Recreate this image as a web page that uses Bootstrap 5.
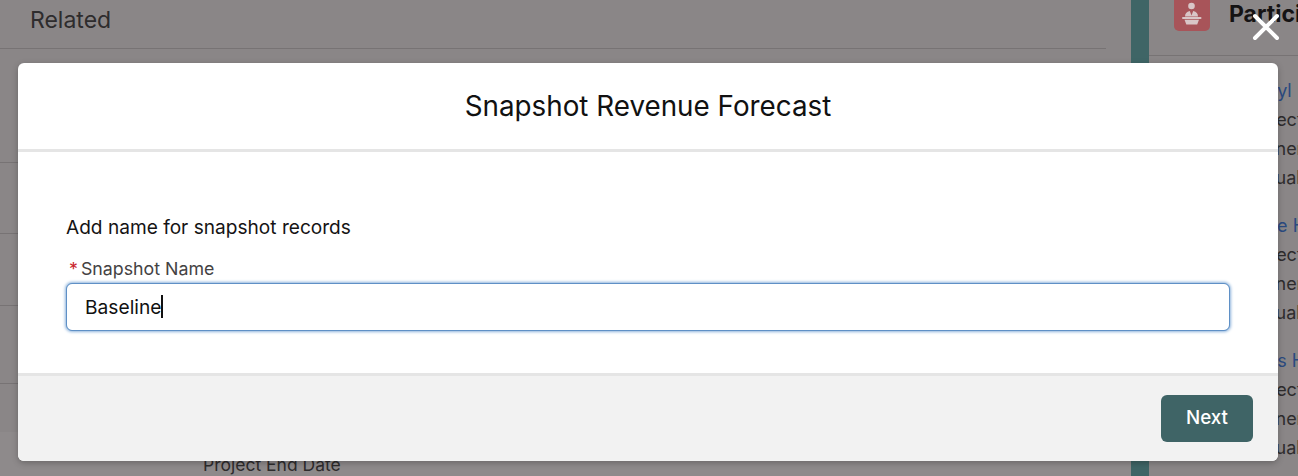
<!DOCTYPE html>
<html lang="en">
<head>
<meta charset="utf-8">
<title>Snapshot Revenue Forecast</title>
<link href="https://cdn.jsdelivr.net/npm/bootstrap@5.3.0/dist/css/bootstrap.min.css" rel="stylesheet">
<style>
html,body{height:476px;overflow:hidden}
body{background:#8a8687;font-family:"Inter","Liberation Sans",sans-serif;color:#1d1b1c}
.page-bg{height:476px;width:1298px}
.left-pane{width:1131px;flex:none}
.rel-head{height:49px;width:1106px;padding:6px 0 0 30px;font-size:23px;line-height:28px;color:#2e2c2d;border-bottom:1px solid #777374}
.rel-row{width:1106px;border-bottom:1px solid #777374}
.h-a{height:114px}.h-b{height:71px}.h-c{height:72px}.h-d{height:78px}
.rel-gap{height:48px;flex:none}
.rel-strip{flex:1;background:#8e8a8b;padding:23px 0 0 203px;font-size:17.500px;line-height:20px;color:#2e2c2d}
.teal-bar{width:18px;flex:none;background:#3f6566}
.right-pane{flex:1;min-width:0;overflow:hidden}
.part-head{height:56px;border-bottom:1px solid #777374;padding-left:25px;gap:19px}
.part-icon{width:36px;height:31px;background:#a85459;border-radius:0 0 5px 5px;flex:none}
.part-title{font-size:23px;font-weight:700;line-height:28px;color:#151314;white-space:nowrap}
.part-list{padding:20px 0 0 98px;white-space:nowrap;font-size:18px}
.part-item{margin-bottom:19px}
.part-item div{line-height:29px;color:#2e2c2d}
.part-item .p-name{color:#2b4a80}
.part-item .p-role{margin-left:-4px}
.modal-box.modal-content{position:absolute;left:18px;top:63px;width:1260px;height:398px;background:#fff;border:0;border-radius:6px;box-shadow:0 2px 6px rgba(0,0,0,.25)}
.box-head.modal-header{height:89px;flex:none;justify-content:center;border-bottom:3px solid #e5e5e5;padding:0;border-radius:6px 6px 0 0}
.box-title{font-size:27.800px;font-weight:400;line-height:32px;color:#111;margin:0}
.box-body.modal-body{padding:63px 48px 0;flex:1}
.box-intro{font-size:19.100px;line-height:24px;color:#151314;margin-bottom:20px}
.box-label{font-size:17.800px;line-height:20px;color:#444243;margin:0 0 4px 3px;display:block}
.req-mark{color:#c9262c;margin-right:3px}
.field-wrap{position:relative}
.box-input.form-control{height:48px;font-size:19.200px;color:#111;padding:0 18px;border:1px solid #5f90c6;border-radius:6px;box-shadow:0 0 3px 1px #8fb4dc;font-family:inherit}
.box-caret{position:absolute;left:95px;top:12px;width:2px;height:23px;background:#111}
.box-foot.modal-footer{height:88px;flex:none;background:#f2f2f2;border-top:3px solid #e5e5e5;padding:19px 25px 19px 0;border-radius:0 0 6px 6px;align-items:flex-start}
.box-next.btn{width:92px;height:47px;margin:0;background:#3f6466;border:0;border-radius:6px;color:#fff;font-size:18.800px;font-weight:500}
.close-x{position:absolute;left:1252px;top:13px;width:28px;height:28px}
</style>
</head>
<body>
<div class="page-bg d-flex">
  <div class="left-pane d-flex flex-column">
    <div class="rel-head">Related</div>
    <div class="rel-row h-a"></div>
    <div class="rel-row h-b"></div>
    <div class="rel-row h-c"></div>
    <div class="rel-row h-d"></div>
    <div class="rel-gap"></div>
    <div class="rel-strip">Project End Date</div>
  </div>
  <div class="teal-bar"></div>
  <div class="right-pane">
    <div class="part-head d-flex">
      <div class="part-icon">
        <svg class="d-block" width="36" height="31" viewBox="0 0 36 31" aria-hidden="true"><g fill="#d9c6c7"><circle cx="17.500" cy="6" r="3.300"/><path d="M11 16.500c0-3 1.500-4.500 4.800-5.500l1.700 4.500 1.700-4.500c3.300 1 4.800 2.500 4.800 5.500z"/><rect x="8" y="17" width="19.500" height="2" rx="1"/><path d="M10.500 19.800h14.500l-1.800 4.700H12.300z"/></g></svg>
      </div>
      <div class="part-title">Participants</div>
    </div>
    <div class="part-list">
      <div class="part-item"><div class="p-name">Daryl K</div><div class="p-role">Project</div><div>Owner</div><div>Actual</div></div>
      <div class="part-item"><div class="p-name">Mike H</div><div class="p-role">Project</div><div>Owner</div><div>Actual</div></div>
      <div class="part-item"><div class="p-name">Jess H</div><div class="p-role">Project</div><div>Owner</div><div>Actual</div></div>
    </div>
  </div>
</div>

<div class="modal-content modal-box">
  <div class="modal-header box-head"><h2 class="box-title">Snapshot Revenue Forecast</h2></div>
  <div class="modal-body box-body">
    <p class="box-intro">Add name for snapshot records</p>
    <label class="box-label" for="snap"><span class="req-mark">*</span>Snapshot Name</label>
    <div class="field-wrap">
      <input id="snap" class="form-control box-input" type="text" value="Baseline">
      <span class="box-caret"></span>
    </div>
  </div>
  <div class="modal-footer box-foot"><button class="btn box-next" type="button">Next</button></div>
</div>

<svg class="close-x" viewBox="0 0 28 28" aria-label="Close" role="img"><path d="M3 3L25 25M25 3L3 25" stroke="#fff" stroke-width="4" stroke-linecap="round"/></svg>
<script src="https://cdn.jsdelivr.net/npm/bootstrap@5.3.0/dist/js/bootstrap.bundle.min.js"></script>
</body>
</html>
